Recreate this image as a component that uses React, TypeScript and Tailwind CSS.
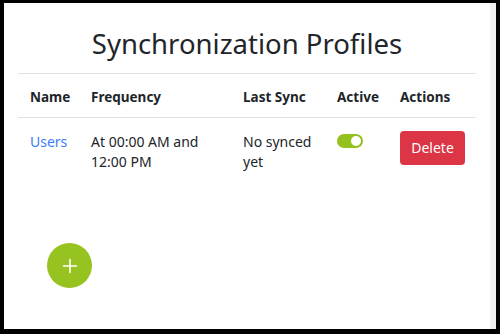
import { Plus } from "lucide-react";

const font = { fontFamily: '"Noto Sans", "Open Sans", sans-serif' };

export default function App() {
  return (
    <div className="flex h-[334px] w-[500px] bg-black pb-[5px] pl-[4px] pr-[4px] pt-[3px]" style={font}>
      <div className="flex flex-1 flex-col bg-white px-[14px]">
        <h1 className="mt-[22px] text-center text-[27.5px] leading-[38px] text-[#212529]">
          Synchronization Profiles
        </h1>
        <div className="mt-[10px] border-t border-[#dee2e6]" />
        <table className="w-full table-fixed text-[14px] text-[#212529]">
          <thead>
            <tr className="border-b border-[#dee2e6] text-[13.5px]">
              <th className="w-[61px] px-[12px] pb-[10px] pt-[13px] text-left font-bold">Name</th>
              <th className="w-[152px] px-[12px] pb-[10px] pt-[13px] text-left font-bold">Frequency</th>
              <th className="w-[94px] px-[12px] pb-[10px] pt-[13px] text-left font-bold">Last Sync</th>
              <th className="w-[63px] px-[12px] pb-[10px] pt-[13px] text-left font-bold">Active</th>
              <th className="px-[12px] pb-[10px] pt-[13px] text-left font-bold">Actions</th>
            </tr>
          </thead>
          <tbody>
            <tr className="align-top leading-[20px]">
              <td className="px-[12px] pt-[14px]">
                <a className="text-[#3b7cfd]">Users</a>
              </td>
              <td className="px-[12px] pt-[14px]">At 00:00 AM and 12:00 PM</td>
              <td className="px-[12px] pt-[14px]">No synced yet</td>
              <td className="px-[12px] pt-[16px]">
                <span className="flex h-[14px] w-[26px] items-center justify-end rounded-full bg-[#95c11f] pr-[2px]">
                  <span className="h-[10px] w-[10px] rounded-full bg-white" />
                </span>
              </td>
              <td className="px-[12px] pt-[13px]">
                <button className="h-[34px] w-[65px] rounded-[4px] bg-[#dc3545] text-[14px] text-white">
                  Delete
                </button>
              </td>
            </tr>
          </tbody>
        </table>
        <div className="mt-[71px] pl-[29px]">
          <button className="flex h-[45px] w-[45px] items-center justify-center rounded-full bg-[#97c320] text-white">
            <Plus size={22} strokeWidth={1.7} />
          </button>
        </div>
      </div>
      <div className="w-[6px] bg-[#f0f0f0]" />
    </div>
  );
}
